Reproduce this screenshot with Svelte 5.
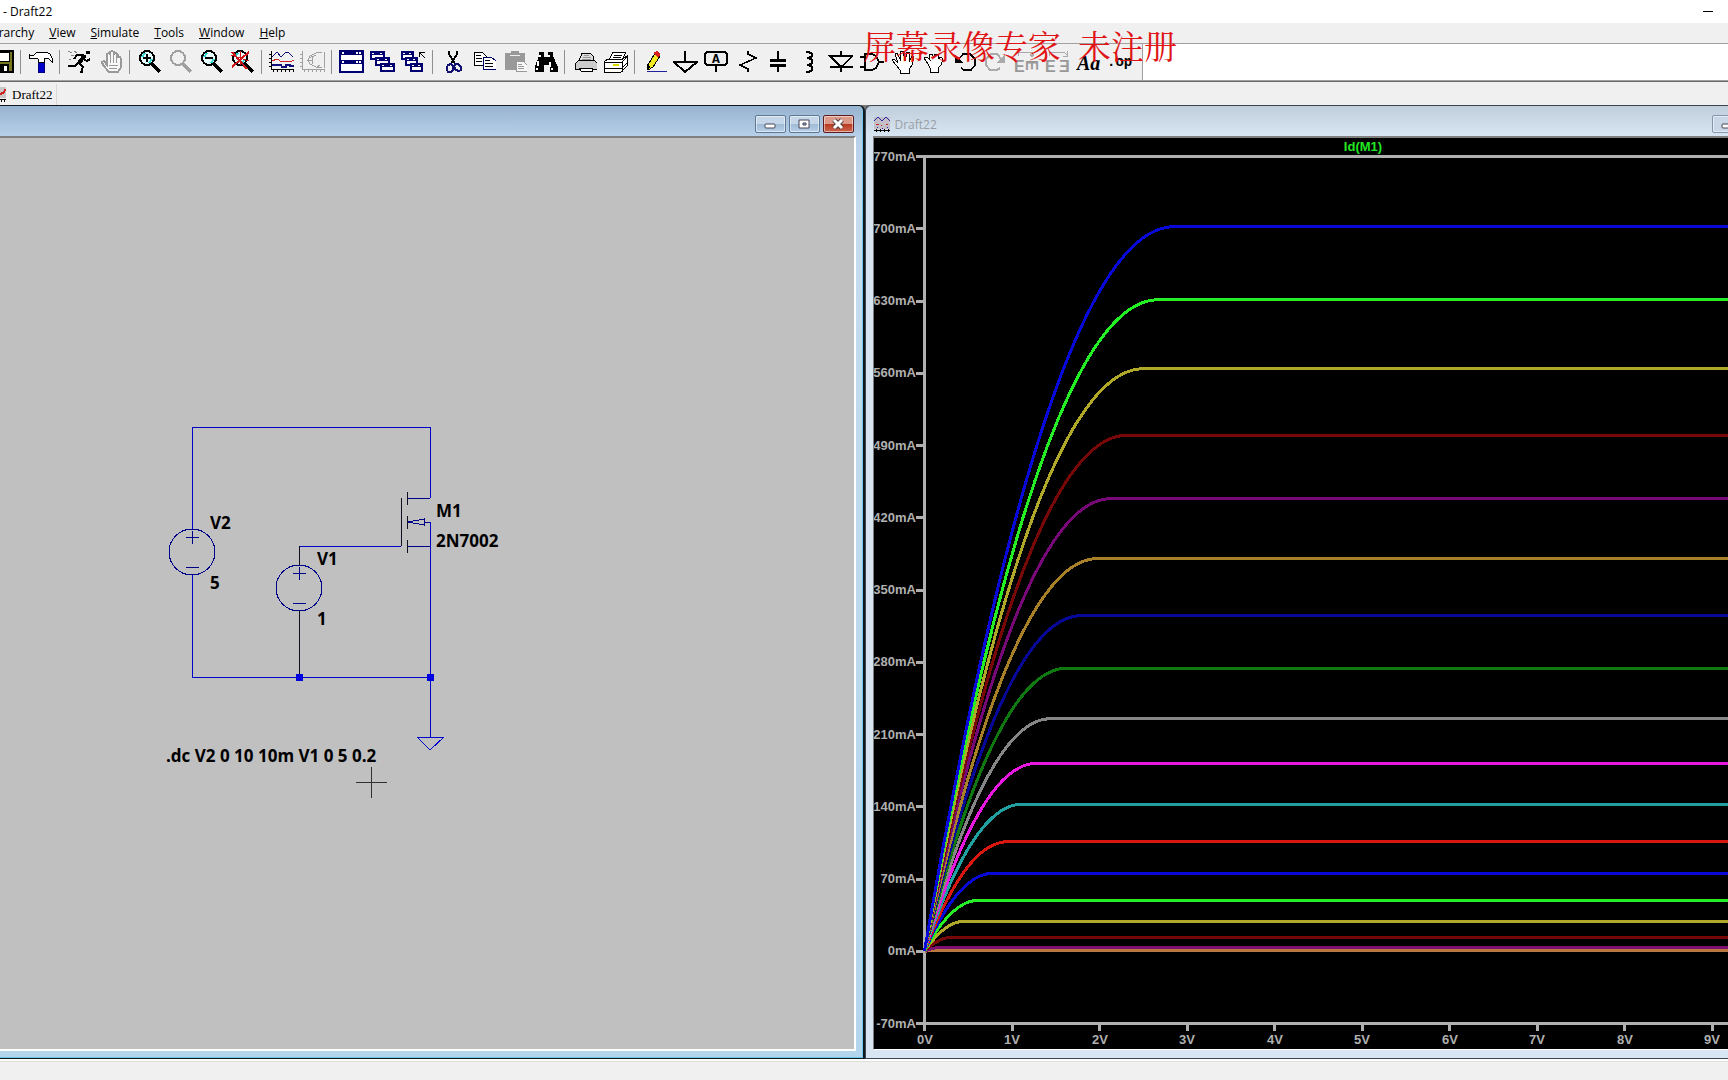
<script>
  const menus = ['View', 'Simulate', 'Tools', 'Window', 'Help']

  const lens = (fill, line) => `
    <circle cx="10" cy="8" r="7" fill="${fill}" stroke="${line}" stroke-width="2"/>
    <path d="M15 14l8 8" stroke="${line}" stroke-width="4"/>`
  const glass = lens('#e8ffff', '#000') + '<path d="M5 7l3-4M12 13l3-4" stroke="#30d8d8" stroke-width="2"/>'

  const miniWindow = (x, y, w, h) => `
    <path d="M${x} ${y}h${w}v${h}h-${w}z" fill="#fff" stroke="#000070" stroke-width="2"/>
    <path d="M${x} ${y + 1}h${w}" stroke="#000070" stroke-width="4"/>
    <path d="M${x + 1} ${y + 1}h2M${x + w - 4} ${y + 1}h2" stroke="#fff"/>`

  const icons = {
    save: `<path d="M2 1h22v21H2z" fill="#787820" stroke="#000" stroke-width="2"/>
      <path d="M6 2h14v9H6z" fill="#fff" stroke="#000"/><path d="M7 14h13v8H7z" fill="#000"/><path d="M15 16h3v5h-3z" fill="#fff"/>`,
    hammer: `<path d="M10 12h6v10h-6z" fill="#0000c8" stroke="#000080"/>
      <path d="M1 4l2 2 3-1 3-3h9l4 2 2 4v4l-4-4h-4v4h-6V9L7 8 3 9 1 8z" fill="#fff" stroke="#000"/>`,
    run: `<path d="M1 1l4 2M4 5l3 1M7 1l3 2M2 9h2" stroke="#888"/>
      <path d="M19 1h4v3h-4z" fill="#000"/><path d="M18 5l-6 8" stroke="#000" stroke-width="4"/>
      <path d="M17 5l-7 0-3 4M16 9l4 2 3-2M12 12l-4 4-7 0M12 13l4 4-2 5 2 0" fill="none" stroke="#000" stroke-width="2"/>`,
    hand: `<path d="M4 12l2-1 3 4V4l2-1 1 1V2l2-1 2 1v2l2-1 2 2v2l2 0 1 2v8l-3 5H11l-6-7z" fill="#f8f8f8" stroke="#999" stroke-width="2"/>
      <path d="M12 4v9M15 3v10M18 5v8M11 15l9 1M11 18h8" stroke="#999" stroke-width="1"/>`,
    zoomIn: glass + '<path d="M6 8h8M10 4v8" stroke="#000" stroke-width="2"/>',
    zoomArea: lens('#f0f0f0', '#a0a0a0'),
    zoomOut: glass + '<path d="M6 8h8" stroke="#000" stroke-width="2"/>',
    zoomFit: glass + '<path d="M2 2l15 17M19 2L2 17" stroke="#d01818" stroke-width="2"/><path d="M1 5l18 6M10 1l0 14" stroke="#d01818"/>',
    autorange: `<path d="M2 1v18h23M0 4h2M0 8h2M0 12h2M0 16h2M4 19v3M8 19v3M12 19v3M16 19v3M20 19v3M24 19v3" fill="none" stroke="#000"/>
      <path d="M3 7l5-5 4 5 5-5h2l5 5" fill="none" stroke="#101078"/>
      <path d="M3 11l5-2 5 3 5-1 3 1 4-2" fill="none" stroke="#d02020"/>
      <path d="M3 15h9l1 2h4v-2h4v1h4" fill="none" stroke="#101078" stroke-width="2"/>`,
    smith: `<path d="M2 1v18h23M0 4h2M0 8h2M0 12h2M0 16h2M4 19v3M8 19v3M12 19v3M16 19v3M20 19v3M24 19v3" fill="none" stroke="#a0a0a0"/>
      <path d="M24 2v16M22 2l-6 1-6 3-2 4 2 4 6 3 6 1M9 8l7-3M12 7v7M7 10h5M19 3l2-1M17 17l3-2" fill="none" stroke="#a0a0a0"/>`,
    tile: `<path d="M1 1h23v21H1z" fill="#fff" stroke="#000070" stroke-width="2"/>
      <path d="M1 3h23M1 12h23" stroke="#000070" stroke-width="4"/>
      <path d="M3 3h2M17 3h2M20 3h2M3 12h2M17 12h2M20 12h2" stroke="#fff" stroke-width="2"/>`,
    cascade: miniWindow(1, 2, 13, 7) + miniWindow(6, 8, 13, 7) + miniWindow(11, 14, 13, 7),
    closeAll: miniWindow(1, 2, 11, 7) + miniWindow(5, 8, 11, 7) + miniWindow(10, 14, 11, 7) +
      '<path d="M18 2h6M18 2v5M18 2l6 6" fill="none" stroke="#000" stroke-width="1"/>',
    cut: `<path d="M9 1v3l6 10M17 1v3l-6 10" fill="none" stroke="#000" stroke-width="2"/>
      <path d="M8 15l3-1 2 2v4l-2 2H8l-1-2v-3zM15 14h3l3 3v3l-2 1-3-1-2-3z" fill="none" stroke="#101070" stroke-width="2"/>`,
    copy: `<path d="M3 2h8l4 4v9H3z" fill="#fff" stroke="#000"/><path d="M5 5h5M5 8h6M5 11h6" stroke="#000"/>
      <path d="M12 7h8l5 4v8H12z" fill="#fff" stroke="#000060"/><path d="M14 10h5M14 13h8M14 16h8" stroke="#000"/>`,
    paste: `<path d="M3 3h20v17H3z" fill="#999"/><path d="M9 1h8v4H9z" fill="#999"/><path d="M8 5h10" stroke="#eee"/>
      <path d="M14 11h7l4 4v6H14z" fill="#f8f8f8" stroke="#999"/><path d="M16 14h4M16 16h6M16 18h6" stroke="#999"/>`,
    find: `<path d="M6 2h5v5h4V2h5v4l5 11v5h-8v-7h-6v7H2v-6l4-10z" fill="#000"/>
      <path d="M7 5v2M5 11v5M16 5v2M17 12v5M4 18v2M19 18v2" stroke="#fff" stroke-width="2"/>`,
    print: `<path d="M7 11l3-8h8l3 3v5" fill="#ddd" stroke="#000"/><path d="M12 5h5M11 7h8M10 9h9" stroke="#999"/>
      <path d="M3 14l4-4h15l3 3v6H3z" fill="#ccc" stroke="#000"/><path d="M7 18h13v3H9z" fill="#fff" stroke="#000"/>`,
    printSetup: `<path d="M6 10l4-8h13l-4 8z" fill="#fff" stroke="#000"/><path d="M11 5h8M10 7h8" stroke="#000"/>
      <path d="M1 12l4-3h15l4-3v10l-6 6H1z" fill="#fff" stroke="#000"/>
      <path d="M1 12h18l5-5M19 12v10M1 18h18l5-5" fill="none" stroke="#000"/><path d="M10 15h6" stroke="#d8d800" stroke-width="2"/>`,
    pencil: `<path d="M13 3l5 3-7 11-5 3v-5z" fill="#f0e820" stroke="#000"/><path d="M12 2l3-1 3 2v3l-2 1-4-3z" fill="#d82020"/>
      <path d="M5 14l4 3-4 3z" fill="#000"/><path d="M5 21h20" stroke="#2020a0"/>`,
    ground: '<path d="M12 1v10M1 12h23L12 22z" fill="none" stroke="#000" stroke-width="2"/>',
    label: `<path d="M12 15v7" stroke="#000" stroke-width="2"/><path d="M3 2h18l2 2v9l-2 2H3l-2-2V4z" fill="#eee" stroke="#000" stroke-width="2"/>
      <text x="12" y="13" text-anchor="middle" font-family="Liberation Mono, monospace" font-size="13" font-weight="bold">A</text>`,
    resistor: '<path d="M13 1v3l8 4-16 7 8 4v3" fill="none" stroke="#000" stroke-width="1.5"/>',
    capacitor: '<path d="M12 1v9M12 15v7" stroke="#000" stroke-width="2"/><path d="M4 10h16M4 15h16" stroke="#000" stroke-width="3"/>',
    inductor: '<path d="M9 2h3l3 2v2l-3 2h-2 2l3 2v3l-3 2h-2 2l3 2v3l-3 2H9" fill="none" stroke="#000" stroke-width="2"/>',
    diode: '<path d="M13 1v5M13 17v5M2 17h23M2 6h23L13 17z" fill="none" stroke="#000" stroke-width="1.5"/>',
    gate: '<path d="M1 7h5M1 17h5M19 12h6M6 4h7l4 2 3 6-3 6-4 2H6z" fill="none" stroke="#000" stroke-width="2"/>',
    move: `<path d="M2 10l2-1 4 4-3-9 2-1 4 8-1-9 3-1 2 10 2-9 2 0v10l3-6 2 1-2 8-3 5v3H10v-3z" fill="#fff" stroke="#000"/>`,
    drag: `<path d="M3 8l3-1 3 3-1-5 3-1 2 4 1-4 3 1v4l3-2 2 2-2 6-3 3v4H9v-4l-2-4z" fill="#fff" stroke="#000"/>`,
    undo: '<path d="M6 10l5-6h7l5 5v6l-4 5h-7l-3-2" fill="none" stroke="#000" stroke-width="1.5"/><path d="M3 5v8h9z" fill="#000"/>',
    redo: '<path d="M19 10l-5-6H8L3 9v6l4 5h7l3-2" fill="none" stroke="#aaa" stroke-width="2"/><path d="M22 5v8h-9z" fill="#aaa"/>',
    rotate: `<g fill="#999" font-family="Liberation Sans, sans-serif" font-size="16" font-weight="bold"><text x="0" y="22">E</text>
      <text transform="translate(12 10) rotate(90)" x="0" y="0">E</text></g><path d="M4 6V2h14v4M16 4l2 3 2-3" fill="none" stroke="#aaa"/>`,
    mirror: `<g fill="#999" font-family="Liberation Sans, sans-serif" font-size="16" font-weight="bold"><text x="0" y="22">E</text>
      <text x="14" y="22">Ǝ</text></g><path d="M4 6V2h15l3 3M22 1v5h-4" fill="none" stroke="#aaa"/>`,
    text: '<text x="1" y="20" font-family="Liberation Serif, serif" font-size="20" font-weight="bold" font-style="italic">Aa</text>',
    directive: '<text x="0" y="16" font-family="Liberation Mono, monospace" font-size="14" font-weight="bold">.op</text>',
  }

  const toolGroups = [
    ['hammer'],
    ['run', 'hand'],
    ['zoomIn', 'zoomArea', 'zoomOut', 'zoomFit'],
    ['autorange', 'smith'],
    ['tile', 'cascade', 'closeAll'],
    ['cut', 'copy', 'paste', 'find'],
    ['print', 'printSetup'],
    ['pencil', 'ground', 'label', 'resistor', 'capacitor', 'inductor', 'diode', 'gate', 'move', 'drag', 'undo', 'redo', 'rotate', 'mirror', 'text', 'directive'],
  ]

  // drain current in saturation (mA), drain voltage where it is reached (V)
  const traces = [
    { sat: 0.7, knee: 0.1, color: '#b87840' },
    { sat: 3.8, knee: 0.2, color: '#7c1070' },
    { sat: 13.5, knee: 0.32, color: '#780808' },
    { sat: 29, knee: 0.46, color: '#b0a828' },
    { sat: 49.4, knee: 0.62, color: '#24ee24' },
    { sat: 75.5, knee: 0.78, color: '#0808d8' },
    { sat: 106.1, knee: 0.95, color: '#d81810' },
    { sat: 142.4, knee: 1.11, color: '#20a0a0' },
    { sat: 182.1, knee: 1.28, color: '#e818e0' },
    { sat: 225.3, knee: 1.44, color: '#868686' },
    { sat: 274.1, knee: 1.62, color: '#107810' },
    { sat: 325.1, knee: 1.79, color: '#080898' },
    { sat: 380.5, knee: 1.98, color: '#a88028' },
    { sat: 438.5, knee: 2.13, color: '#780878' },
    { sat: 499.9, knee: 2.31, color: '#780808' },
    { sat: 564.4, knee: 2.5, color: '#b0a828' },
    { sat: 631.3, knee: 2.67, color: '#24ee24' },
    { sat: 702, knee: 2.85, color: '#0808d8' },
  ]

  const xAt = (volts) => 50.5 + volts * 87.55
  const yAt = (mA) => 813.25 - (mA / 70) * 72.25

  const tracePath = ({ sat, knee }) => {
    let d = ''
    for (let i = 0; i <= 40; i++) {
      const u = i / 40
      const x = xAt(u * knee).toFixed(1)
      const y = yAt(sat * (2 * u - u * u)).toFixed(1)
      d += `${i ? 'L' : 'M'}${x} ${y}`
    }
    return d + `H${xAt(20)}`
  }

  const currents = Array.from({ length: 13 }, (_, i) => 770 - i * 70)
  const volts = Array.from({ length: 11 }, (_, i) => i)
</script>

{#snippet tool(name)}
  <button class="tool" aria-label={name}>
    <svg width="25" height="24" viewBox="0 0 25 24" shape-rendering="crispEdges">{@html icons[name]}</svg>
  </button>
{/snippet}

<div class="app">
  <header class="titlebar">
    <span>- Draft22</span>
    <button class="minimize" aria-label="Minimize">
      <svg width="10" height="1"><rect width="10" height="1" /></svg>
    </button>
  </header>

  <nav class="menubar">
    <button class="first"><u>H</u>ierarchy</button>
    {#each menus as menu}
      <button><u>{menu[0]}</u>{menu.slice(1)}</button>
    {/each}
  </nav>

  <div class="toolbar">
    <div class="tools">
      <div class="group clipped">{@render tool('save')}</div>
      {#each toolGroups as group}
        <i class="separator"></i>
        <div class="group">
          {#each group as name}
            {@render tool(name)}
          {/each}
        </div>
      {/each}
    </div>
    <div class="watermark">屏幕录像专家  未注册</div>
  </div>

  <div class="tabs">
    <button class="tab">
      <svg width="6" height="16" shape-rendering="crispEdges">
        <rect width="6" height="11" fill="#c8c8c8" />
        <path d="M0 7l3-1 3-4" fill="none" stroke="#d02020" stroke-width="2" />
        <path d="M0 12h6M1 12v3M4 12v3" stroke="#000" />
      </svg>
      Draft22
    </button>
  </div>

  <main>
    <section class="window active">
      <div class="caption">
        <div class="controls">
          <button aria-label="Minimize window">
            <svg width="13" height="12"><rect x="1" y="6" width="10" height="4" rx="1" fill="#fff" stroke="#445" /></svg>
          </button>
          <button aria-label="Maximize window">
            <svg width="13" height="12"><path d="M1 2h10v8H1z" fill="#fff" stroke="#445" /><path d="M5 5h3v2H5z" fill="#9bd" stroke="#445" /></svg>
          </button>
          <button class="close" aria-label="Close window">
            <svg width="13" height="12"><path d="M2 2l8 8M10 2l-8 8" stroke="#544" stroke-width="5" /><path d="M2 2l8 8M10 2l-8 8" stroke="#fff" stroke-width="3" /></svg>
          </button>
        </div>
      </div>
      <div class="pane schematic">
        <svg width="100%" height="100%" shape-rendering="crispEdges">
          <g class="wire">
            <path d="M192 391V289H430V360M192 437V539H430M430 384V599M299 408H401" />
            <path d="M417 599H444L430 612Z" />
            <rect x="296" y="536" width="6" height="6" />
            <rect x="427" y="536" width="6" height="6" />
          </g>
          <g class="symbol">
            <circle cx="192" cy="414" r="23" />
            <path d="M186 399H199M192 393V406M186 429H199" />
            <circle cx="299" cy="450" r="23" />
            <path d="M293 435H306M299 429V442M293 465H306" />
            <path d="M407 360H430M407 408H430M430 384H425M408 384L424 381V387Z" />
          </g>
          <path class="lead" d="M299 408V427M299 473V536M401 360V408M407 354V367M407 378V391M407 402V415" />
          <path class="crosshair" d="M356 644H387M371 629V660" />
          <g class="labels">
            <text x="210" y="391">V2</text>
            <text x="210" y="451">5</text>
            <text x="317" y="427">V1</text>
            <text x="317" y="487">1</text>
            <text x="436" y="379">M1</text>
            <text x="436" y="409">2N7002</text>
            <text x="166" y="624">.dc V2 0 10 10m V1 0 5 0.2</text>
          </g>
        </svg>
      </div>
    </section>

    <section class="window">
      <div class="caption">
        <svg width="16" height="15" shape-rendering="crispEdges">
          <rect width="16" height="12" fill="#c4bfc6" />
          <path d="M0 4l4-4 4 4 4-4 4 4" fill="none" stroke="#2828a0" />
          <path d="M2 7h3M7 8h1M12 7h2" stroke="#c02828" />
          <path d="M3 10h1M8 11h1M13 10h1" stroke="#2828a0" />
          <path d="M0 13h16M2 12v3M6 12v3M10 12v3M14 12v3" stroke="#000" />
        </svg>
        <span>Draft22</span>
        <div class="controls offscreen">
          <button aria-label="Minimize plot">
            <svg width="13" height="12"><rect x="1" y="6" width="10" height="4" rx="1" fill="#fff" stroke="#445" /></svg>
          </button>
        </div>
      </div>
      <div class="pane plot">
        <svg width="100%" height="100%" shape-rendering="crispEdges">
          <g class="axes">
            <path d="M{xAt(20)} {yAt(770)}H{xAt(0)}V{yAt(-70)}H{xAt(20)}" />
            {#each currents as mA}
              <path d="M42 {yAt(mA)}H50" />
              <text class="current" x="42" y={Math.round(yAt(mA)) + 4}>{mA}mA</text>
            {/each}
            {#each volts as v}
              <path d="M{xAt(v)} 885V893" />
              <text class="volt" x={Math.round(xAt(v))} y="906">{v}V</text>
            {/each}
          </g>
          <text class="legend" x="489" y="13">Id(M1)</text>
          {#each traces as trace}
            <path class="trace" d={tracePath(trace)} stroke={trace.color} />
          {/each}
        </svg>
      </div>
    </section>
  </main>

  <footer></footer>
</div>

<style>
  :global(body) {
    margin: 0;
    overflow: hidden;
  }

  .app {
    display: flex;
    flex-direction: column;
    height: 100vh;
    background: #f0f0f0;
    color: #000;
    font-family: 'Open Sans', 'Noto Sans', sans-serif;
    font-size: 12px;
  }

  button {
    margin: 0;
    padding: 0;
    border: 0;
    background: none;
    color: inherit;
    font: inherit;
  }

  .titlebar {
    display: flex;
    align-items: center;
    justify-content: space-between;
    height: 23px;
    padding: 0 15px 0 3px;
    background: #fff;
  }
  .minimize {
    display: flex;
    padding: 8px 0;
  }

  .menubar {
    display: flex;
    gap: 1px;
    height: 20px;
    overflow: hidden;
    border-bottom: 1px solid #a0a0a0;
  }
  .menubar button {
    padding: 0 7px;
    line-height: 20px;
  }
  .menubar .first {
    margin-left: -27px;
  }

  .toolbar {
    position: relative;
    display: flex;
    height: 36px;
    background: #fff;
    border-bottom: 1px solid #a0a0a0;
    box-shadow: 0 1px #696969;
  }
  .tools {
    display: flex;
    align-items: center;
    padding-right: 7px;
    background: #f0f0f0;
    border-right: 1px solid #a0a0a0;
  }
  .group {
    display: flex;
  }
  .clipped {
    width: 17px;
    justify-content: flex-end;
    overflow: hidden;
  }
  .separator {
    width: 1px;
    height: 24px;
    margin: 0 4px 0 3px;
    background: #909090;
  }
  .tool {
    display: flex;
    flex: none;
    justify-content: center;
    width: 31px;
  }
  .watermark {
    position: absolute;
    left: 863px;
    top: -19px;
    color: #e01414;
    font-family: 'Noto Serif CJK SC', 'Noto Sans CJK SC', serif;
    font-size: 33px;
    line-height: 40px;
    white-space: pre;
  }

  .tabs {
    display: flex;
    height: 21px;
    padding-top: 3px;
  }
  .tab {
    display: flex;
    align-items: center;
    gap: 6px;
    padding-right: 4px;
    border-right: 1px solid #d8d8d8;
    font-family: 'Liberation Serif', serif;
    font-size: 13px;
  }

  main {
    display: flex;
    flex: 1;
    min-height: 0;
    background: #777;
  }
  .window {
    display: flex;
    flex: 1;
    flex-direction: column;
    min-width: 0;
    box-sizing: border-box;
    padding: 0 0 8px 7px;
    overflow: hidden;
    border: solid #3c4650;
    border-width: 1px 0 1px 1px;
    border-radius: 6px 0 0 0;
    background: linear-gradient(#c0cedc, #d8e6f3 30px, #d8e6f3);
  }
  .window.active {
    padding: 0 7px 7px 0;
    border-color: #101820;
    border-width: 1px 2px 1px 0;
    border-radius: 0 6px 0 0;
    background: linear-gradient(#98b3cf, #b7d0e9 30px, #c4dcee 100px, #b4d6ec);
    box-shadow: inset -1px -1px #70c8e8;
  }
  .caption {
    display: flex;
    align-items: center;
    gap: 5px;
    height: 30px;
    padding-left: 1px;
    color: #9a9ea4;
  }
  .caption span {
    padding-top: 7px;
  }
  .caption > svg {
    margin-top: 6px;
  }
  .controls {
    display: flex;
    gap: 3px;
    margin: 6px 2px 0 auto;
  }
  .offscreen {
    margin-right: -15px;
  }
  .controls button {
    display: flex;
    align-items: center;
    justify-content: center;
    box-sizing: border-box;
    width: 31px;
    height: 18px;
    border: 1px solid #5d7996;
    border-radius: 2px;
    background: linear-gradient(#c4d6e8 50%, #9fbad5 50%, #b8d0e8);
    box-shadow: inset 0 0 0 1px #ffffff80;
  }
  .offscreen button {
    border-color: #8296ac;
    background: #c8d6e6;
  }
  .controls .close {
    border-color: #5c1c20;
    background: linear-gradient(#dc9888 50%, #b83820 50%, #cc6850);
  }

  .pane {
    flex: 1;
    min-height: 0;
    border-top: 2px solid #808080;
  }
  .pane svg {
    display: block;
  }
  .schematic {
    border-right: 2px solid #fff;
    border-bottom: 2px solid #fff;
    background: #c0c0c0;
  }
  .plot {
    border-left: 1px solid #808080;
    border-bottom: 1px solid #fff;
    background: #000;
  }

  .wire path,
  .symbol {
    fill: none;
    stroke: #0000c8;
  }
  .wire rect {
    fill: #0000e0;
    stroke: #0000e0;
  }
  .symbol {
    stroke: #000088;
  }
  .lead {
    stroke: #101020;
  }
  .crosshair {
    stroke: #303030;
  }
  .labels {
    font-size: 17px;
    font-weight: 700;
  }

  .axes path {
    fill: none;
    stroke: #b0b0b0;
    stroke-width: 3;
  }
  .plot text {
    fill: #b0b0b0;
    font-family: 'Liberation Sans', Arial, sans-serif;
    font-size: 13px;
    font-weight: 700;
  }
  .plot .current {
    text-anchor: end;
  }
  .plot .volt,
  .plot .legend {
    text-anchor: middle;
  }
  .plot .legend {
    fill: #20e820;
  }
  .trace {
    fill: none;
    stroke-width: 3;
  }

  footer {
    height: 19px;
    border-top: 2px solid #fff;
    box-shadow: inset 0 1px #dde2d8;
  }
</style>
